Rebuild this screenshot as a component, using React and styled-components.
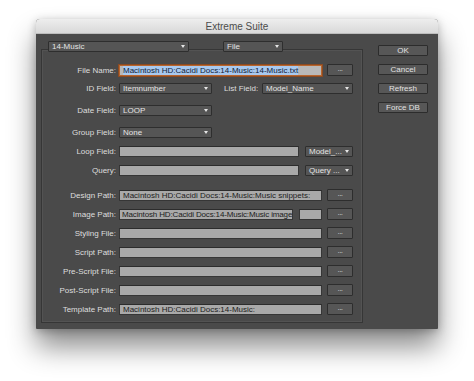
import styled, { createGlobalStyle } from "styled-components"

const GlobalStyle = createGlobalStyle`
  html, body {
    margin: 0;
    padding: 0;
    background: #ffffff;
  }
  body {
    font-family: "Liberation Sans", Arial, Helvetica, sans-serif;
  }
`

const Page = styled.div`
  width: 474px;
  height: 381px;
  box-sizing: border-box;
  padding: 19px 0 0 36px;
  overflow: hidden;
`

const Window = styled.div`
  width: 402px;
  height: 310px;
  display: flex;
  flex-direction: column;
  background: #4a4a4a;
  border-radius: 4px 4px 1px 1px;
  box-shadow: 0 18px 28px rgba(0, 0, 0, 0.45), 0 2px 8px rgba(0, 0, 0, 0.25);
  overflow: hidden;
`

const TitleBar = styled.div`
  height: 15px;
  line-height: 16px;
  text-align: center;
  font-size: 10px;
  color: #4c4c4c;
  background: linear-gradient(#eeeeee, #d9d9d9);
  border-bottom: 1px solid #bdbdbd;
  box-sizing: border-box;
`

const Body = styled.div`
  flex: 1;
  display: flex;
  gap: 15px;
  padding: 7px 10px 6px 5px;
`

const LeftColumn = styled.div`
  width: 322px;
  display: flex;
  flex-direction: column;
`

const PopupRow = styled.div`
  display: flex;
  gap: 34px;
  height: 11px;
  padding-left: 7px;
  position: relative;
  z-index: 1;
`

const Panel = styled.div`
  flex: 1;
  margin-top: -3px;
  border: 1px solid #363636;
  box-shadow: inset 0 0 0 1px rgba(255, 255, 255, 0.05);
  padding: 14px 10px 7px 0;
  display: flex;
  flex-direction: column;
`

const Row = styled.div`
  display: flex;
  align-items: center;
  height: 12px;
  margin-top: ${({ gap }) => gap || 0}px;
`

const Label = styled.span`
  width: ${({ w }) => w || 74}px;
  margin-right: ${({ mr }) => (mr === undefined ? 3 : mr)}px;
  margin-left: ${({ ml }) => ml || 0}px;
  text-align: ${({ left }) => (left ? "left" : "right")};
  font-size: 8px;
  color: #dedede;
  white-space: nowrap;
  flex-shrink: 0;
`

const Field = styled.div`
  width: ${({ w }) => w}px;
  height: 11px;
  box-sizing: border-box;
  margin-right: ${({ mr }) => mr || 0}px;
  background: #a9a9a9;
  border: 1px solid #363636;
  border-top-color: #2c2c2c;
  font-size: 8px;
  line-height: 9px;
  letter-spacing: ${({ tight }) => (tight ? "-0.15px" : "normal")};
  color: #202020;
  padding: 0 ${({ tight }) => (tight ? "0 0 2px" : "3px")};
  white-space: nowrap;
  overflow: hidden;
  flex-shrink: 0;
  ${({ focused }) =>
    focused &&
    `
    background: #b9b9b9;
    border: 1px solid #b8662e;
    box-shadow: 0 0 0 1px #8a4a22;
  `}
`

const Selected = styled.span`
  background: #a9c9ef;
  color: #0f2036;
`

const Popup = styled.div`
  position: relative;
  width: ${({ w }) => w}px;
  height: 11px;
  box-sizing: border-box;
  margin-left: ${({ ml }) => ml || 0}px;
  background: #555555;
  border: 1px solid #2e2e2e;
  border-radius: 1px;
  font-size: 8px;
  line-height: 9px;
  color: #e4e4e4;
  padding: 0 10px 0 3px;
  white-space: nowrap;
  overflow: hidden;
  flex-shrink: 0;

  &::after {
    content: "";
    position: absolute;
    right: 3px;
    top: 3px;
    border-left: 2.5px solid transparent;
    border-right: 2.5px solid transparent;
    border-top: 3px solid #e6e6e6;
  }
`

const DotsButton = styled.div`
  width: 26px;
  height: 12px;
  margin-left: ${({ ml }) => ml || 5}px;
  box-sizing: border-box;
  background: #565656;
  border: 1px solid #2d2d2d;
  border-radius: 1px;
  color: #d4d4d4;
  font-size: 8px;
  line-height: 8px;
  text-align: center;
  letter-spacing: -0.5px;
  flex-shrink: 0;
`

const ButtonColumn = styled.div`
  display: flex;
  flex-direction: column;
  gap: 8px;
  padding-top: 4px;
`

const SideButton = styled.div`
  width: 50px;
  height: 11px;
  box-sizing: border-box;
  background: #575757;
  border: 1px solid #2c2c2c;
  border-radius: 1px;
  font-size: 8px;
  line-height: 9px;
  text-align: center;
  color: #e2e2e2;
`

const PathRow = ({ label, value, gap }) => (
  <Row gap={gap}>
    <Label>{label}</Label>
    <Field w={203}>{value}</Field>
    <DotsButton>...</DotsButton>
  </Row>
)

export default function App() {
  return (
    <Page>
      <GlobalStyle />
      <Window>
        <TitleBar>Extreme Suite</TitleBar>
        <Body>
          <LeftColumn>
            <PopupRow>
              <Popup w={141}>14-Music</Popup>
              <Popup w={60}>File</Popup>
            </PopupRow>
            <Panel>
              <Row>
                <Label>File Name:</Label>
                <Field w={203} focused>
                  <Selected>Macintosh HD:Cacidi Docs:14-Music:14-Music.txt</Selected>
                </Field>
                <DotsButton>...</DotsButton>
              </Row>
              <Row gap={6}>
                <Label>ID Field:</Label>
                <Popup w={93}>Itemnumber</Popup>
                <Label w={34} ml={12} mr={4} left>List Field:</Label>
                <Popup w={91}>Model_Name</Popup>
              </Row>
              <Row gap={10}>
                <Label>Date Field:</Label>
                <Popup w={93}>LOOP</Popup>
              </Row>
              <Row gap={10}>
                <Label>Group Field:</Label>
                <Popup w={93}>None</Popup>
              </Row>
              <Row gap={7}>
                <Label>Loop Field:</Label>
                <Field w={180} />
                <Popup w={48} ml={6}>Model_...</Popup>
              </Row>
              <Row gap={7}>
                <Label>Query:</Label>
                <Field w={180} />
                <Popup w={48} ml={6}>Query ...</Popup>
              </Row>
              <PathRow gap={13} label="Design Path:" value="Macintosh HD:Cacidi Docs:14-Music:Music snippets:" />
              <Row gap={7}>
                <Label>Image Path:</Label>
                <Field w={174} mr={6} tight>Macintosh HD:Cacidi Docs:14-Music:Music image</Field>
                <Field w={23} />
                <DotsButton>...</DotsButton>
              </Row>
              <PathRow gap={7} label="Styling File:" />
              <PathRow gap={7} label="Script Path:" />
              <PathRow gap={7} label="Pre-Script File:" />
              <PathRow gap={7} label="Post-Script File:" />
              <PathRow gap={7} label="Template Path:" value="Macintosh HD:Cacidi Docs:14-Music:" />
            </Panel>
          </LeftColumn>
          <ButtonColumn>
            <SideButton>OK</SideButton>
            <SideButton>Cancel</SideButton>
            <SideButton>Refresh</SideButton>
            <SideButton>Force DB</SideButton>
          </ButtonColumn>
        </Body>
      </Window>
    </Page>
  )
}
